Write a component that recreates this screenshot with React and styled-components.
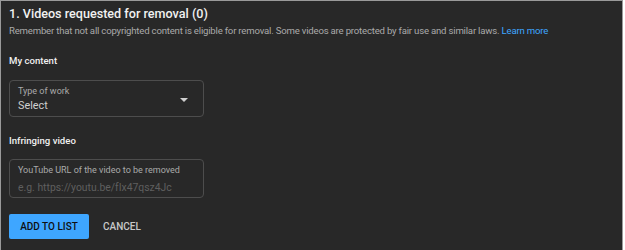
import React from 'react';
import styled, { createGlobalStyle } from 'styled-components';

const GlobalStyle = createGlobalStyle`
  html, body {
    margin: 0;
    padding: 0;
    background: #ffffff;
  }
  body {
    font-family: Roboto, "Noto Sans", Arial, sans-serif;
  }
`;

const Panel = styled.section`
  box-sizing: border-box;
  width: 623px;
  height: 252px;
  background: #282828;
  border: 1px solid #9a9a9a;
  border-bottom: none;
  padding: 4px 8px 0 8px;
  color: #ffffff;
`;

const Title = styled.h2`
  margin: 0;
  font-size: 12.6px;
  font-weight: 500;
  line-height: 18px;
  color: #f1f1f1;
`;

const Notice = styled.p`
  margin: 2px 0 0 0;
  font-size: 9.6px;
  letter-spacing: -0.2px;
  line-height: 12px;
  color: #aaaaaa;
  white-space: nowrap;
  & a {
    color: #3ea6ff;
    text-decoration: none;
  }
`;

const SectionLabel = styled.h4`
  margin: ${(p) => p.$top}px 0 0 0;
  font-size: 9.6px;
  font-weight: 500;
  line-height: 12px;
  color: #f1f1f1;
`;

const Field = styled.div`
  box-sizing: border-box;
  margin-top: ${(p) => p.$top}px;
  width: 195px;
  height: ${(p) => p.$height}px;
  border: 1px solid #4d4d4d;
  border-radius: 4px;
  padding: 4px 8px 0 8px;
  display: flex;
  align-items: center;
  justify-content: space-between;
`;

const FieldText = styled.div`
  display: flex;
  flex-direction: column;
  align-self: flex-start;
`;

const FieldLabel = styled.span`
  font-size: 9px;
  line-height: 12px;
  color: #aaaaaa;
`;

const FieldValue = styled.span`
  margin-top: ${(p) => (p.$placeholder ? 5 : 2)}px;
  font-size: ${(p) => (p.$placeholder ? 10.4 : 10.8)}px;
  line-height: 13px;
  color: ${(p) => (p.$placeholder ? '#5f5f5f' : '#d0d0d0')};
`;

const Caret = styled.span`
  width: 0;
  height: 0;
  margin-right: 7px;
  margin-top: -2px;
  border-left: 4.5px solid transparent;
  border-right: 4.5px solid transparent;
  border-top: 4.5px solid #cfcfcf;
`;

const Actions = styled.div`
  margin-top: 16px;
  display: flex;
  align-items: center;
  gap: 14px;
`;

const Button = styled.button`
  box-sizing: border-box;
  height: 25px;
  min-width: ${(p) => (p.$primary ? '80px' : '0')};
  padding: 0 ${(p) => (p.$primary ? '10px' : '0')};
  border: none;
  border-radius: 2px;
  background: ${(p) => (p.$primary ? '#3ea6ff' : 'transparent')};
  color: ${(p) => (p.$primary ? '#0f0f0f' : '#c8c8c8')};
  font-family: Roboto, Arial, sans-serif;
  font-size: 10px;
  font-weight: 500;
  text-transform: uppercase;
  cursor: pointer;
`;

export default function App() {
  return (
    <>
      <GlobalStyle />
      <Panel>
        <Title>1. Videos requested for removal (0)</Title>
        <Notice>
          Remember that not all copyrighted content is eligible for removal. Some videos are protected by fair use
          and similar laws. <a href="#">Learn more</a>
        </Notice>

        <SectionLabel $top={18}>My content</SectionLabel>
        <Field $top={13} $height={37}>
          <FieldText>
            <FieldLabel>Type of work</FieldLabel>
            <FieldValue>Select</FieldValue>
          </FieldText>
          <Caret />
        </Field>

        <SectionLabel $top={18}>Infringing video</SectionLabel>
        <Field $top={12} $height={39}>
          <FieldText>
            <FieldLabel>YouTube URL of the video to be removed</FieldLabel>
            <FieldValue $placeholder>e.g. https://youtu.be/fIx47qsz4Jc</FieldValue>
          </FieldText>
        </Field>

        <Actions>
          <Button $primary>Add to list</Button>
          <Button>Cancel</Button>
        </Actions>
      </Panel>
    </>
  );
}
